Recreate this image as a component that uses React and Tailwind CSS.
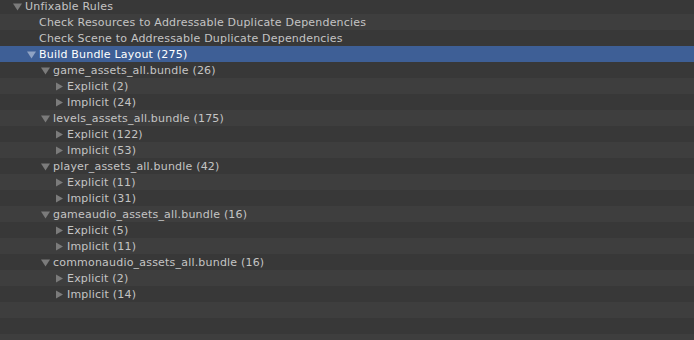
import React from "react";

const rows = [
  { d: 0, a: "down", t: "Unfixable Rules" },
  { d: 1, a: null, t: "Check Resources to Addressable Duplicate Dependencies" },
  { d: 1, a: null, t: "Check Scene to Addressable Duplicate Dependencies" },
  { d: 1, a: "down", t: "Build Bundle Layout (275)", sel: true },
  { d: 2, a: "down", t: "game_assets_all.bundle (26)" },
  { d: 3, a: "right", t: "Explicit (2)" },
  { d: 3, a: "right", t: "Implicit (24)" },
  { d: 2, a: "down", t: "levels_assets_all.bundle (175)" },
  { d: 3, a: "right", t: "Explicit (122)" },
  { d: 3, a: "right", t: "Implicit (53)" },
  { d: 2, a: "down", t: "player_assets_all.bundle (42)" },
  { d: 3, a: "right", t: "Explicit (11)" },
  { d: 3, a: "right", t: "Implicit (31)" },
  { d: 2, a: "down", t: "gameaudio_assets_all.bundle (16)" },
  { d: 3, a: "right", t: "Explicit (5)" },
  { d: 3, a: "right", t: "Implicit (11)" },
  { d: 2, a: "down", t: "commonaudio_assets_all.bundle (16)" },
  { d: 3, a: "right", t: "Explicit (2)" },
  { d: 3, a: "right", t: "Implicit (14)" },
  { d: 0, a: null, t: "" },
  { d: 0, a: null, t: "" },
  { d: 0, a: null, t: "" },
];

const indents = ["pl-[13px]", "pl-[27px]", "pl-[41px]", "pl-[55px]"];

function Arrow({ dir, sel }) {
  const fill = sel ? "#8fa3c4" : "#7b7b7b";
  if (dir === "down")
    return (
      <svg width="9" height="9" viewBox="0 0 9 9" className="shrink-0">
        <path d="M0 1.5 L9 1.5 L4.5 8.5 Z" fill={fill} />
      </svg>
    );
  if (dir === "right")
    return (
      <svg width="9" height="9" viewBox="0 0 9 9" className="shrink-0">
        <path d="M1 0.5 L8 4.5 L1 8.5 Z" fill={fill} />
      </svg>
    );
  return <span className="w-[9px] shrink-0" />;
}

export default function App() {
  return (
    <div className="w-[694px] h-[340px] overflow-hidden bg-[#383838] font-['DejaVu_Sans',sans-serif]">
      <div className="-mt-[2px]">
        {rows.map((r, i) => (
          <div
            key={i}
            className={`h-4 flex items-center gap-[3px] text-[11px] leading-none tracking-[0.2px] ${indents[r.d]} ${
              r.sel
                ? "bg-[#3e5f96] text-white"
                : i % 2
                ? "bg-[#3e3e3e] text-[#c4c4c4]"
                : "bg-[#383838] text-[#c4c4c4]"
            }`}
          >
            <Arrow dir={r.a} sel={r.sel} />
            <span className="whitespace-nowrap">{r.t}</span>
          </div>
        ))}
      </div>
    </div>
  );
}
